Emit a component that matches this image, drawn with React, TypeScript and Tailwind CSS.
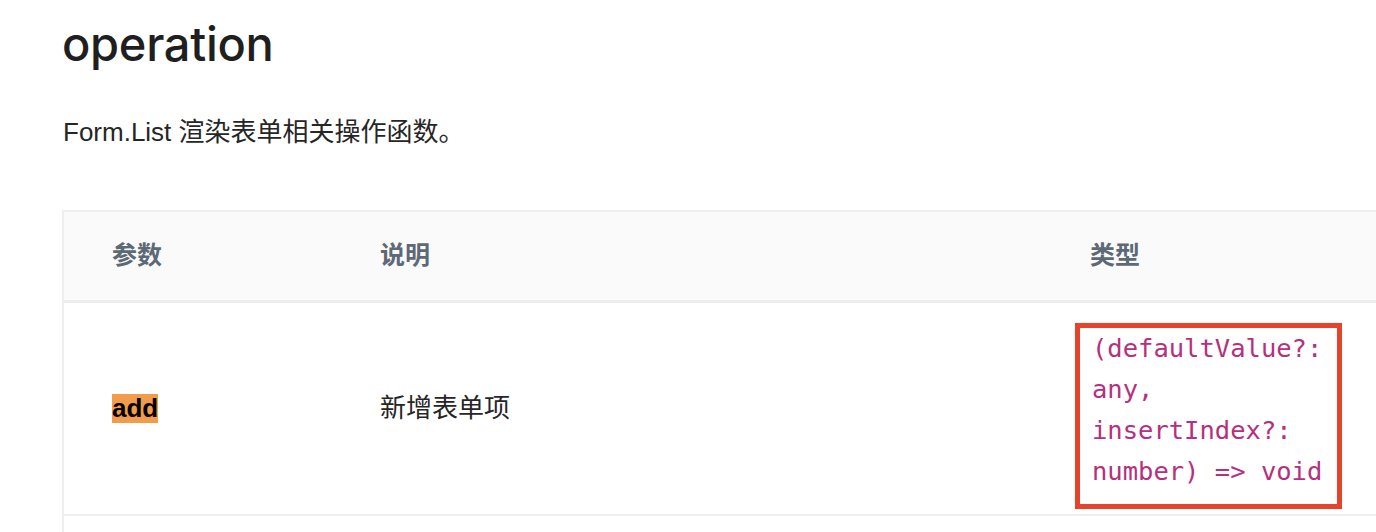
import React from "react";

const cjk = { fontFamily: '"Liberation Sans", "Noto Sans CJK SC", sans-serif' };

export default function App() {
  return (
    <div className="w-[1376px] h-[532px] overflow-hidden bg-white">
      <div className="pl-[62px]">
        <h1
          className="pt-[20px] text-[47px] font-medium leading-none text-[#1f1f1f] tracking-[-0.3px]"
          style={{ fontFamily: 'Inter, "Noto Sans", sans-serif' }}
        >
          operation
        </h1>
        <p className="mt-[45px] text-[26px] leading-[40px] text-[#262626] pl-[1px]" style={cjk}>
          Form.List 渲染表单相关操作函数。
        </p>
        <div className="mt-[58px] w-[1400px] border-l-2 border-t-2 border-[#efefef]" style={cjk}>
          <div className="grid grid-cols-[268px_710px_1fr] h-[91px] bg-[#fafafa] border-b-[3px] border-[#ececec] items-center text-[25px] font-bold text-[#5d6975]">
            <div className="pl-[48px]">参数</div>
            <div className="pl-[48px]">说明</div>
            <div className="pl-[48px]">类型</div>
          </div>
          <div className="grid grid-cols-[268px_710px_1fr] h-[213px] border-b-2 border-[#efefef] text-[26px] text-[#262626]">
            <div className="pl-[48px] flex items-center">
              <span className="bg-[#f19b4b] font-bold text-black leading-[29px]">add</span>
            </div>
            <div className="pl-[48px] flex items-center">新增表单项</div>
            <div className="pl-[33px] pt-[20px]">
              <div className="w-[267px] border-[5px] border-[#e5432b] pl-[12px] pr-[6px] pb-[12px] pt-0">
                <code
                  className="block text-[25.5px] leading-[41px] text-[#b5307e]"
                  style={{ fontFamily: '"DejaVu Sans Mono", "Liberation Mono", monospace' }}
                >
                  (defaultValue?: any, insertIndex?: number) =&gt; void
                </code>
              </div>
            </div>
          </div>
          <div className="h-[40px]" />
        </div>
      </div>
    </div>
  );
}
